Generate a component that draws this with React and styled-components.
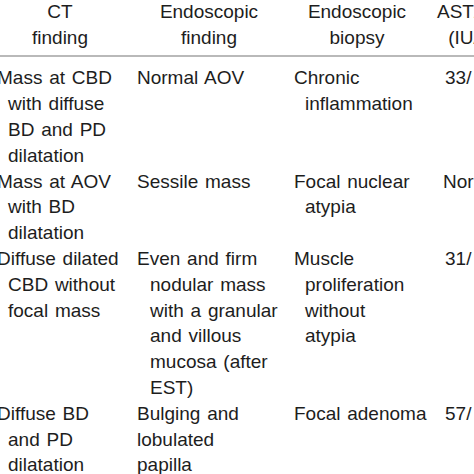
import React from "react";
import styled, { createGlobalStyle } from "styled-components";

const GlobalStyle = createGlobalStyle`
  html, body {
    margin: 0;
    padding: 0;
    background: #ffffff;
    overflow: hidden;
  }
`;

const Page = styled.div`
  width: 474px;
  height: 474px;
  overflow: hidden;
  background: #ffffff;
  color: #1d1d1d;
  font-family: "Liberation Sans", Arial, sans-serif;
  font-size: 19px;
  line-height: 25.7px;
  word-spacing: 1.5px;
`;

const Row = styled.div`
  display: grid;
  grid-template-columns: 130px 160px 147px 1fr;
  padding-top: ${(p) => p.$top || 0}px;
  padding-bottom: ${(p) => p.$bottom || 0}px;
  margin-top: ${(p) => p.$lift || 0}px;
`;

const HeadCell = styled.div`
  text-align: center;
  white-space: nowrap;
  padding-right: ${(p) => p.$shift || 0}px;
`;

// last header column is cut by the page edge, so it gets a fixed box
const HeadBox = styled.div`
  width: ${(p) => p.$width}px;
`;

const Cell = styled.div`
  white-space: nowrap;
  padding-left: ${(p) => p.$pad}px;
  text-indent: ${(p) => -(p.$hang || 0)}px;
`;

const Divider = styled.div`
  height: 2px;
  background: #b9b9b9;
  margin-bottom: 8px;
`;

const head = [
  { lines: ["CT", "finding"], shift: 10 },
  { lines: ["Endoscopic", "finding"], shift: 2 },
  { lines: ["Endoscopic", "biopsy"], shift: 13 },
  { lines: ["AST/ALT", "(IU/L)"], shift: 0, width: 70 },
];

const rows = [
  [
    { lines: ["Mass at CBD", "with diffuse", "BD and PD", "dilatation"], pad: 8, hang: 11 },
    { lines: ["Normal AOV"], pad: 7 },
    { lines: ["Chronic", "inflammation"], pad: 15, hang: 11 },
    { lines: ["33/"], pad: 8 },
  ],
  [
    { lines: ["Mass at AOV", "with BD", "dilatation"], pad: 8, hang: 11 },
    { lines: ["Sessile mass"], pad: 7 },
    { lines: ["Focal nuclear", "atypia"], pad: 15, hang: 11 },
    { lines: ["Normal"], pad: 6 },
  ],
  [
    { lines: ["Diffuse dilated", "CBD without", "focal mass"], pad: 8, hang: 11 },
    {
      lines: ["Even and firm", "nodular mass", "with a granular", "and villous", "mucosa (after", "EST)"],
      pad: 20,
      hang: 13,
    },
    { lines: ["Muscle", "proliferation", "without", "atypia"], pad: 15, hang: 11 },
    { lines: ["31/"], pad: 8 },
  ],
  [
    { lines: ["Diffuse BD", "and PD", "dilatation"], pad: 8, hang: 11 },
    { lines: ["Bulging and", "lobulated", "papilla"], pad: 7 },
    { lines: ["Focal adenoma"], pad: 15, hang: 11 },
    { lines: ["57/"], pad: 8 },
  ],
];

function Lines({ lines }) {
  return lines.map((l, i) => (
    <React.Fragment key={i}>
      {i > 0 && <br />}
      {l}
    </React.Fragment>
  ));
}

export default function App() {
  return (
    <Page>
      <GlobalStyle />
      <Row $lift={-1} $bottom={5}>
        {head.map((h, i) => (
          <HeadCell key={i} $shift={h.shift}>
            {h.width ? (
              <HeadBox $width={h.width}>
                <Lines lines={h.lines} />
              </HeadBox>
            ) : (
              <Lines lines={h.lines} />
            )}
          </HeadCell>
        ))}
      </Row>
      <Divider />
      {rows.map((r, i) => (
        <Row key={i} $top={i === 0 ? 0 : 0.5}>
          {r.map((c, j) => (
            <Cell key={j} $pad={c.pad} $hang={c.hang}>
              <Lines lines={c.lines} />
            </Cell>
          ))}
        </Row>
      ))}
    </Page>
  );
}
